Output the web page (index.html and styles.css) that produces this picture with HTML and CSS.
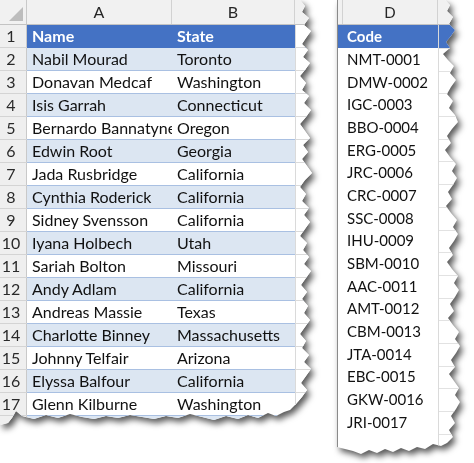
FILE: index.html
```html
<!DOCTYPE html>
<html>
<head>
<meta charset="utf-8">
<link rel="stylesheet" href="styles.css">
</head>
<body>
<div class="page">
  <div class="sheet sheet-left">
    <div class="paper paper-left">
      <div class="row head">
        <div class="rn corner"><svg width="14" height="14" viewBox="0 0 14 14"><polygon points="14,0 14,14 0,14" fill="#bdbdbd"/></svg></div>
        <div class="ch">A</div><div class="ch">B</div><div class="ch c-rest"></div>
      </div>
      <div class="row title"><div class="rn">1</div><div class="c">Name</div><div class="c">State</div><div class="c rest"></div></div>
      <div class="row band"><div class="rn">2</div><div class="c">Nabil Mourad</div><div class="c">Toronto</div><div class="c rest"></div></div>
      <div class="row"><div class="rn">3</div><div class="c">Donavan Medcaf</div><div class="c">Washington</div><div class="c rest"></div></div>
      <div class="row band"><div class="rn">4</div><div class="c">Isis Garrah</div><div class="c">Connecticut</div><div class="c rest"></div></div>
      <div class="row"><div class="rn">5</div><div class="c">Bernardo Bannatyne</div><div class="c">Oregon</div><div class="c rest"></div></div>
      <div class="row band"><div class="rn">6</div><div class="c">Edwin Root</div><div class="c">Georgia</div><div class="c rest"></div></div>
      <div class="row"><div class="rn">7</div><div class="c">Jada Rusbridge</div><div class="c">California</div><div class="c rest"></div></div>
      <div class="row band"><div class="rn">8</div><div class="c">Cynthia Roderick</div><div class="c">California</div><div class="c rest"></div></div>
      <div class="row"><div class="rn">9</div><div class="c">Sidney Svensson</div><div class="c">California</div><div class="c rest"></div></div>
      <div class="row band"><div class="rn">10</div><div class="c">Iyana Holbech</div><div class="c">Utah</div><div class="c rest"></div></div>
      <div class="row"><div class="rn">11</div><div class="c">Sariah Bolton</div><div class="c">Missouri</div><div class="c rest"></div></div>
      <div class="row band"><div class="rn">12</div><div class="c">Andy Adlam</div><div class="c">California</div><div class="c rest"></div></div>
      <div class="row"><div class="rn">13</div><div class="c">Andreas Massie</div><div class="c">Texas</div><div class="c rest"></div></div>
      <div class="row band"><div class="rn">14</div><div class="c">Charlotte Binney</div><div class="c">Massachusetts</div><div class="c rest"></div></div>
      <div class="row"><div class="rn">15</div><div class="c">Johnny Telfair</div><div class="c">Arizona</div><div class="c rest"></div></div>
      <div class="row band"><div class="rn">16</div><div class="c">Elyssa Balfour</div><div class="c">California</div><div class="c rest"></div></div>
      <div class="row"><div class="rn">17</div><div class="c">Glenn Kilburne</div><div class="c">Washington</div><div class="c rest"></div></div>
      <div class="row band"><div class="rn"></div><div class="c"></div><div class="c"></div><div class="c rest"></div></div>
    </div>
  </div>
  <div class="sheet sheet-right">
    <div class="paper paper-right">
      <div class="rrow head"><div class="ch"></div><div class="ch">D</div><div class="ch"></div></div>
      <div class="rrow title"><div class="c"></div><div class="c">Code</div><div class="c rest"></div></div>
      <div class="rrow"><div class="c"></div><div class="c">NMT-0001</div><div class="c rest"></div></div>
      <div class="rrow"><div class="c"></div><div class="c">DMW-0002</div><div class="c rest"></div></div>
      <div class="rrow"><div class="c"></div><div class="c">IGC-0003</div><div class="c rest"></div></div>
      <div class="rrow"><div class="c"></div><div class="c">BBO-0004</div><div class="c rest"></div></div>
      <div class="rrow"><div class="c"></div><div class="c">ERG-0005</div><div class="c rest"></div></div>
      <div class="rrow"><div class="c"></div><div class="c">JRC-0006</div><div class="c rest"></div></div>
      <div class="rrow"><div class="c"></div><div class="c">CRC-0007</div><div class="c rest"></div></div>
      <div class="rrow"><div class="c"></div><div class="c">SSC-0008</div><div class="c rest"></div></div>
      <div class="rrow"><div class="c"></div><div class="c">IHU-0009</div><div class="c rest"></div></div>
      <div class="rrow"><div class="c"></div><div class="c">SBM-0010</div><div class="c rest"></div></div>
      <div class="rrow"><div class="c"></div><div class="c">AAC-0011</div><div class="c rest"></div></div>
      <div class="rrow"><div class="c"></div><div class="c">AMT-0012</div><div class="c rest"></div></div>
      <div class="rrow"><div class="c"></div><div class="c">CBM-0013</div><div class="c rest"></div></div>
      <div class="rrow"><div class="c"></div><div class="c">JTA-0014</div><div class="c rest"></div></div>
      <div class="rrow"><div class="c"></div><div class="c">EBC-0015</div><div class="c rest"></div></div>
      <div class="rrow"><div class="c"></div><div class="c">GKW-0016</div><div class="c rest"></div></div>
      <div class="rrow"><div class="c"></div><div class="c">JRI-0017</div><div class="c rest"></div></div>
      <div class="rrow"><div class="c"></div><div class="c"></div><div class="c rest"></div></div>
    </div>
  </div>
</div>
</body>
</html>
```

FILE: styles.css
```css
html, body {
  margin: 0;
  padding: 0;
  background: #ffffff;
}
.page {
  display: flex;
  align-items: flex-start;
  width: 474px;
  height: 463px;
  overflow: hidden;
  font-family: Lato, "Open Sans", sans-serif;
  color: #111111;
}
.sheet {
  filter: drop-shadow(3px 4px 3px rgba(0, 0, 0, 0.65));
}
.sheet-left {
  width: 316px;
}
.sheet-right {
  width: 126px;
  margin-left: 21px;
}
.paper {
  background: #ffffff;
  overflow: hidden;
}
.paper-left {
  height: 428px;
  font-size: 16px;
  clip-path: polygon(0 0, 300px 0, 305px 6px, 302px 12px, 309px 18px, 304px 25px, 311px 31px, 306px 38px, 302px 44px, 308px 50px, 303px 57px, 310px 63px, 305px 70px, 300px 76px, 306px 83px, 302px 90px, 309px 96px, 304px 103px, 311px 110px, 306px 117px, 300px 124px, 305px 131px, 310px 138px, 303px 145px, 308px 152px, 302px 159px, 307px 166px, 312px 173px, 305px 180px, 300px 187px, 306px 194px, 302px 201px, 309px 208px, 304px 215px, 310px 222px, 305px 229px, 300px 236px, 307px 243px, 303px 250px, 309px 257px, 304px 264px, 311px 271px, 306px 278px, 301px 285px, 307px 292px, 302px 299px, 308px 306px, 304px 313px, 310px 320px, 305px 327px, 300px 334px, 306px 341px, 302px 348px, 309px 355px, 304px 362px, 311px 369px, 306px 376px, 301px 383px, 307px 390px, 302px 397px, 296px 404px, 290px 410px, 284px 412px, 276px 416px, 268px 413px, 258px 418px, 248px 415px, 238px 419px, 226px 416px, 214px 420px, 202px 417px, 190px 414px, 178px 418px, 166px 416px, 154px 419px, 142px 417px, 130px 415px, 118px 418px, 106px 416px, 94px 419px, 82px 417px, 70px 414px, 58px 418px, 46px 415px, 34px 419px, 22px 416px, 16px 411px, 12px 418px, 8px 423px, 0 425px);
}
.paper-right {
  height: 456px;
  font-size: 15px;
  border-left: 1px solid #8a8a8a;
  box-sizing: border-box;
  clip-path: polygon(0 0, 108px 0, 113px 5px, 110px 11px, 116px 17px, 112px 24px, 118px 30px, 114px 36px, 109px 42px, 113px 48px, 106px 54px, 111px 60px, 117px 66px, 113px 73px, 119px 80px, 114px 87px, 110px 94px, 116px 101px, 112px 108px, 118px 115px, 121px 122px, 115px 129px, 110px 136px, 114px 143px, 108px 150px, 113px 157px, 119px 164px, 115px 171px, 120px 178px, 116px 185px, 111px 192px, 115px 199px, 109px 206px, 114px 213px, 120px 220px, 116px 227px, 121px 234px, 117px 241px, 112px 248px, 116px 255px, 110px 262px, 115px 269px, 121px 276px, 117px 283px, 122px 290px, 118px 297px, 113px 304px, 117px 311px, 111px 318px, 116px 325px, 122px 332px, 118px 339px, 123px 346px, 119px 353px, 114px 360px, 118px 367px, 112px 374px, 117px 381px, 122px 388px, 118px 395px, 123px 402px, 119px 409px, 114px 416px, 118px 423px, 112px 430px, 116px 437px, 110px 443px, 104px 446px, 96px 444px, 88px 449px, 80px 447px, 72px 451px, 64px 448px, 56px 452px, 48px 449px, 40px 453px, 32px 450px, 24px 454px, 16px 451px, 8px 449px, 0 447px);
}

/* left sheet grid */
.row {
  display: grid;
  grid-template-columns: 27px 145px 123px 1fr;
  height: 23px;
  box-sizing: border-box;
  border-bottom: 1px solid #a9c0e2;
}
.row > .c,
.row > .rn,
.row > .ch {
  display: flex;
  align-items: center;
  white-space: nowrap;
  overflow: hidden;
  line-height: 1;
}
.rn {
  justify-content: center;
  padding-right: 4px;
  background: #efefef;
  color: #2a2a2a;
  border-right: 1px solid #c9c9c9;
  box-shadow: 0 1px 0 #d4d4d4;
}
.c {
  padding-left: 5px;
}
.row .rest {
  background: #ffffff;
  border-left: 1px solid #dadada;
  box-shadow: 0 1px 0 #dadada;
}
.head {
  height: 25px;
  background: #f1f1f1;
  border-bottom: 1px solid #c3c3c3;
}
.head .ch {
  justify-content: center;
  color: #262626;
  border-right: 1px solid #d2d2d2;
}
.head .corner {
  align-items: flex-end;
  justify-content: flex-end;
  padding: 0 3px 3px 0;
  box-shadow: none;
  background: #f1f1f1;
}
.head .c-rest {
  border-right: none;
}
.band .c {
  background: #dce6f2;
}
.row.band .rest {
  background: #ffffff;
}
.title .c {
  background: #4472c4;
  color: #ffffff;
  font-weight: bold;
}
.row.title .rest {
  background: #ffffff;
  color: #111111;
}
.row.title {
  border-bottom: 1px solid #4472c4;
}

/* right sheet grid */
.rrow {
  display: grid;
  grid-template-columns: 5px 95px 1fr;
  height: 22.7px;
}
.rrow > div {
  display: flex;
  align-items: center;
  white-space: nowrap;
  overflow: hidden;
  line-height: 1;
}
.rrow .c {
  padding-left: 4px;
}
.rrow .c:first-child {
  padding: 0;
}
.rrow .rest {
  border-left: 1px solid #dadada;
  box-shadow: 0 1px 0 #e2e2e2;
}
.rrow.head {
  height: 25px;
  background: #f1f1f1;
  box-sizing: border-box;
  border-bottom: 1px solid #c3c3c3;
}
.rrow.head .ch {
  justify-content: center;
  color: #262626;
  border-right: 1px solid #d2d2d2;
}
.rrow.title {
  height: 23px;
}
.rrow.title .c:nth-child(2) {
  background: #4472c4;
  color: #ffffff;
  font-weight: bold;
}
```
